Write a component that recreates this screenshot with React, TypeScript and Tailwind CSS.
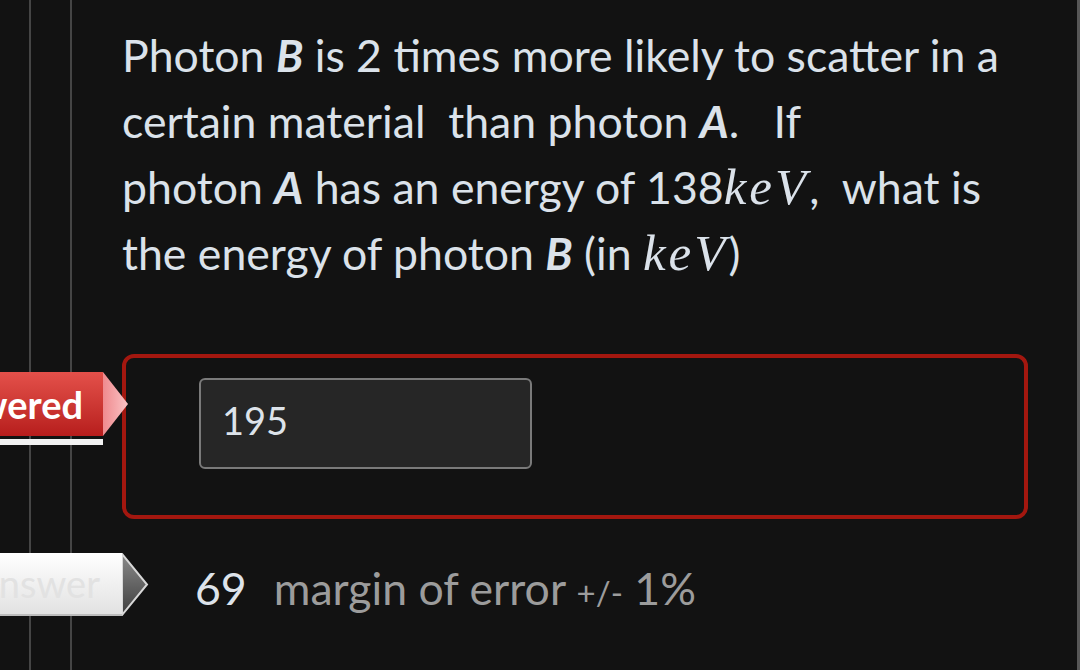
import React from "react";

const lato = { fontFamily: "Lato, 'Noto Sans', sans-serif" };

function Math({ children }: { children: React.ReactNode }) {
  return (
    <span
      className="italic text-[51px] tracking-[3px]"
      style={{ fontFamily: "'Liberation Serif', 'DejaVu Serif', serif" }}
    >
      {children}
    </span>
  );
}

export default function App() {
  return (
    <div
      className="relative w-[1080px] h-[670px] overflow-hidden bg-[#121212] text-[#dbe2ea]"
      style={lato}
    >
      {/* gutter lines */}
      <div className="absolute left-[29px] top-0 h-full w-[2px] bg-[#454545]" />
      <div className="absolute left-[70px] top-0 h-full w-[2px] bg-[#454545]" />
      <div className="absolute right-0 top-0 h-full w-[3px] bg-[#575757]" />

      <div className="flex flex-col pl-[122px] pt-[22px] pr-[52px]">
        {/* question */}
        <div className="text-[44.6px] leading-[66px] whitespace-pre">
          <div>
            Photon <b className="italic">B</b> is 2 times more likely to scatter in a
          </div>
          <div>
            certain material  than photon <b className="italic">A</b>.   If
          </div>
          <div>
            photon <b className="italic">A</b> has an energy of 138<Math>keV</Math>,<span className="ml-[12px]"> what is</span>
          </div>
          <div>
            the energy of photon <b className="italic">B</b> (in <Math>keV</Math>)
          </div>
        </div>

        {/* answer box */}
        <div className="relative mt-[68px] h-[165px] w-[906px] rounded-[12px] border-4 border-[#a3170f]">
          <div className="absolute left-[-126px] top-[14px] flex">
            <div className="flex flex-col">
              <div className="flex h-[64px] w-[103px] items-center justify-end overflow-hidden whitespace-nowrap bg-gradient-to-b from-[#e4504a] to-[#b71c1c] pr-[20px] text-[38px] font-bold text-white">
                Answered
              </div>
              <div className="mt-[3px] h-[6px] w-[103px] bg-[#f2f2f2]" />
            </div>
            <svg width="26" height="64" viewBox="0 0 26 64" className="block">
              <defs>
                <linearGradient id="rg" x1="0" y1="0" x2="1" y2="0">
                  <stop offset="0" stopColor="#ef8a8e" />
                  <stop offset="1" stopColor="#fbc4c6" />
                </linearGradient>
              </defs>
              <polygon points="0,0 25,32 0,64" fill="url(#rg)" />
            </svg>
          </div>
          <div className="ml-[73px] mt-[20px] flex h-[91px] w-[333px] items-center rounded-[6px] border-2 border-[#7a7a7a] bg-[#262626] pl-[21px] pb-[6px] text-[38px] text-[#dde3ea]">
            195
          </div>
        </div>

        {/* correct answer row */}
        <div className="relative mt-[42px] flex items-baseline leading-[1.2] text-[44.6px]">
          <div className="absolute left-[-122px] top-[-8px] flex">
            <div className="flex h-[63px] w-[122px] items-center justify-end overflow-hidden whitespace-nowrap border-b-2 border-[#bdbdbd] bg-gradient-to-b from-[#ffffff] to-[#e2e2e2] pr-[22px] text-[38px] text-[#e2e2e2]">
              Correct Answer
            </div>
            <svg width="27" height="63" viewBox="0 0 27 63" className="block">
              <defs>
                <linearGradient id="gg" x1="0" y1="0" x2="0" y2="1">
                  <stop offset="0" stopColor="#8a8a8a" />
                  <stop offset="1" stopColor="#3e3e3e" />
                </linearGradient>
              </defs>
              <polygon points="0,1 25,31.5 0,62" fill="url(#gg)" stroke="#d8d8d8" strokeWidth="2" />
            </svg>
          </div>
          <span className="ml-[73px] text-[#dde3ea]">69</span>
          <span className="ml-[27px] text-[#9c9c9c]">
            margin of error <span className="text-[33px]">+/-</span> 1%
          </span>
        </div>
      </div>
    </div>
  );
}
